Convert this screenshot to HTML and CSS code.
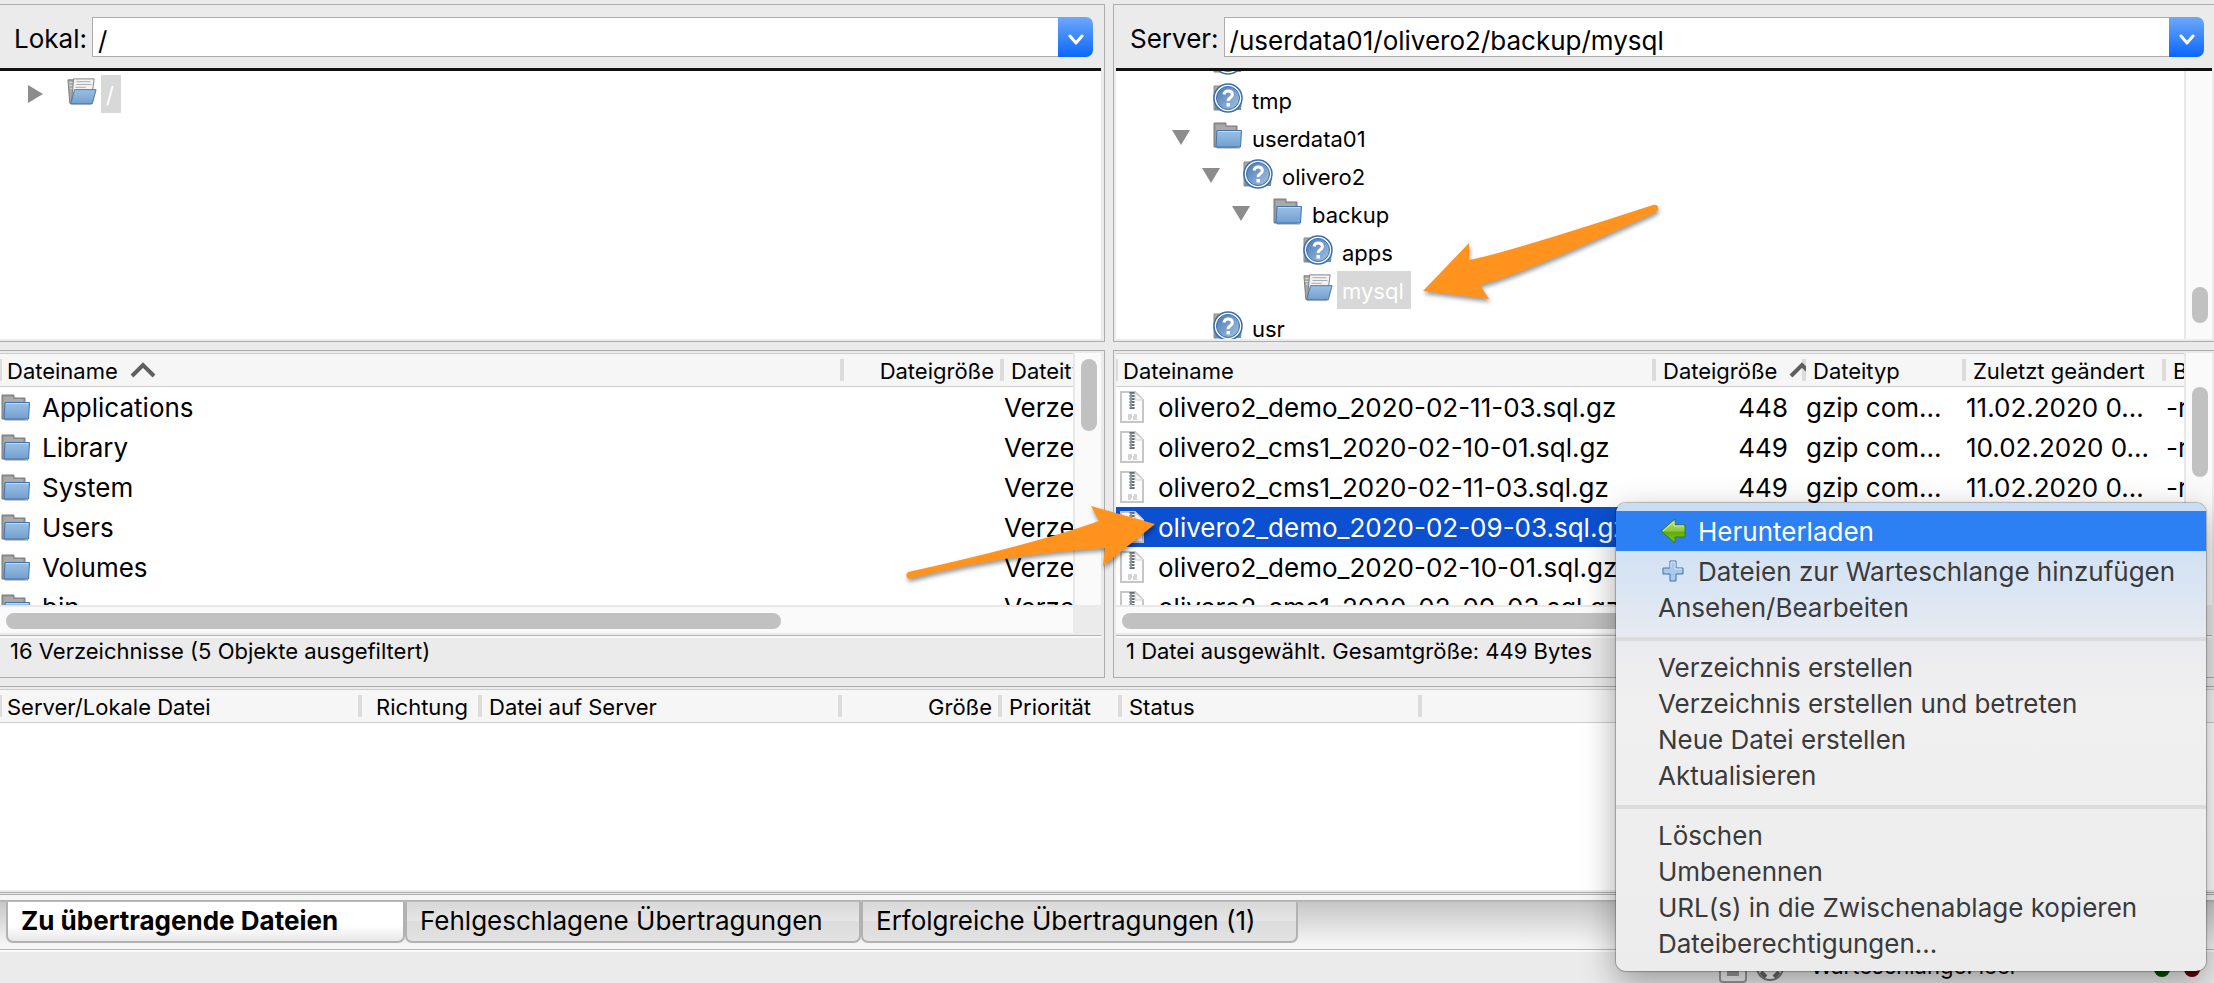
FILE: index.html
```
<!DOCTYPE html>
<html lang="de">
<head>
    <meta charset="UTF-8">
    <meta name="viewport" content="width=device-width, initial-scale=1.0">
    <title>FileZilla</title>
    <link rel="stylesheet" href="styles.css">
</head>
<body>
    <svg class="defs" aria-hidden="true">
        <defs>
            <linearGradient id="blue" x1="0" y1="0" x2="0" y2="1">
                <stop offset="0" stop-color="#9cc0e4"/>
                <stop offset="1" stop-color="#729fcf"/>
            </linearGradient>
            <linearGradient id="ball" x1="0" y1="0" x2="1" y2="1">
                <stop offset="0" stop-color="#4a78b0"/>
                <stop offset="1" stop-color="#a4c4e6"/>
            </linearGradient>
            <linearGradient id="green" x1="0" y1="0" x2="0" y2="1">
                <stop offset="0" stop-color="#b9e27c"/>
                <stop offset="0.5" stop-color="#8cc63c"/>
                <stop offset="0.55" stop-color="#5fae0a"/>
                <stop offset="1" stop-color="#7bc81c"/>
            </linearGradient>
            <symbol id="folder" viewBox="0 0 30 28">
                <path d="M1 25V1h12v3h11v21z" fill="#9b9b9b" stroke="#787878"/>
                <path d="M3 4h9M3 6h19M3 8h19" stroke="#b8b8b8"/>
                <path d="M4 26h23" stroke="#000" stroke-opacity=".2" stroke-width="2"/>
                <path d="M4 8.500h24.500l-1 16.500H3z" fill="url(#blue)" stroke="#3f74b0"/>
                <path d="M5 9.500h22.500" stroke="#c4daf0"/>
            </symbol>
            <symbol id="folder-open" viewBox="0 0 32 30">
                <path d="M1 2h8v25H3z" fill="#a8a8a8" stroke="#777"/>
                <path d="M2 5h5M2 8h5M3 11h4" stroke="#ddd"/>
                <path d="M7 1h22l-2 14-22 9z" fill="#f2f2f2" stroke="#7d7d7d"/>
                <path d="M10 4h15M10 7h16M9 10h11" stroke="#aaa"/>
                <path d="M4 28h22" stroke="#000" stroke-opacity=".25" stroke-width="2"/>
                <path d="M8 12.500h23l-4 15H4z" fill="url(#blue)" stroke="#3f74b0"/>
            </symbol>
            <symbol id="unknown" viewBox="0 0 30 30">
                <path d="M1 3h7v24H1z" fill="#aaa" stroke="#888"/>
                <path d="M2 16h27l-1 11H2z" fill="#5f92c8"/>
                <circle cx="15" cy="15" r="14" fill="#fff" stroke="#3a6ea8" stroke-width="1.500"/>
                <circle cx="15" cy="15" r="11.500" fill="url(#ball)" stroke="#3a6ea8"/>
                <path d="M11 11.500q.5-3.500 4.200-3.500t4.200 3.200q0 2-2.200 3.500t-2 3.300" fill="none" stroke="#fff" stroke-width="3"/>
                <path d="M13.500 20h3.500v3.500h-3.500z" fill="#fff"/>
            </symbol>
            <symbol id="archive" viewBox="0 0 24 32">
                <path d="M1 1h14l8 8v22H1z" fill="#fdfdfd" stroke="#c6c6c6" stroke-width="2"/>
                <path d="M15 2v7h8" fill="#f3f3f3" stroke="#d4d4d4"/>
                <path d="M12 1v17" stroke="#666d70" stroke-width="5" stroke-dasharray="2 1"/>
                <path d="M11 2v15" stroke="#90979a" stroke-width="2"/>
                <path d="M8 26h4M13 26h4M8 24h4M14 24h3M8 28h3M13 28h4" stroke="#aaa"/>
            </symbol>
            <symbol id="sort" viewBox="0 0 26 18">
                <path d="M2 15L13 4l11 11" fill="none" stroke="#5f5f5f" stroke-width="4"/>
            </symbol>
            <symbol id="chevron" viewBox="0 0 16 12">
                <path d="M2 2l6 7 6-7" fill="none" stroke="#fff" stroke-width="3" stroke-linecap="round" stroke-linejoin="round"/>
            </symbol>
        </defs>
    </svg>

    <main class="app">
        <div class="columns">
            <section class="panel local">
                <form class="address">
                    <label for="localPath">Lokal:</label>
                    <input id="localPath" type="text" value="/">
                    <button type="button" aria-label="Lokale Pfade"><svg><use href="#chevron"/></svg></button>
                </form>
                <div class="tree-pane">
                    <ul class="tree">
                        <li><div class="node"><i class="toggle closed"></i><svg><use href="#folder-open"/></svg><span class="current">/</span></div></li>
                    </ul>
                </div>
            </section>
            <section class="panel server">
                <form class="address">
                    <label for="serverPath">Server:</label>
                    <input id="serverPath" type="text" value="/userdata01/olivero2/backup/mysql">
                    <button type="button" aria-label="Server-Pfade"><svg><use href="#chevron"/></svg></button>
                </form>
                <div class="tree-pane">
                    <ul class="tree">
                        <li><div class="node"><i class="toggle"></i><svg><use href="#unknown"/></svg><span></span></div></li>
                        <li><div class="node"><i class="toggle"></i><svg><use href="#unknown"/></svg><span>tmp</span></div></li>
                        <li>
                            <div class="node"><i class="toggle open"></i><svg><use href="#folder"/></svg><span>userdata01</span></div>
                            <ul>
                                <li>
                                    <div class="node"><i class="toggle open"></i><svg><use href="#unknown"/></svg><span>olivero2</span></div>
                                    <ul>
                                        <li>
                                            <div class="node"><i class="toggle open"></i><svg><use href="#folder"/></svg><span>backup</span></div>
                                            <ul>
                                                <li><div class="node"><i class="toggle"></i><svg><use href="#unknown"/></svg><span>apps</span></div></li>
                                                <li><div class="node"><i class="toggle"></i><svg><use href="#folder-open"/></svg><span class="current">mysql</span></div></li>
                                            </ul>
                                        </li>
                                    </ul>
                                </li>
                            </ul>
                        </li>
                        <li><div class="node"><i class="toggle"></i><svg><use href="#unknown"/></svg><span>usr</span></div></li>
                    </ul>
                    <div class="vscroll"><div class="thumb low"></div></div>
                </div>
            </section>

            <section class="panel local">
                <div class="list-pane">
                    <div class="list">
                        <table>
                            <colgroup><col class="c-wide"><col class="c-type"><col></colgroup>
                            <thead>
                                <tr><th>Dateiname<svg class="sort"><use href="#sort"/></svg></th><th class="num">Dateigröße</th><th>Dateityp</th></tr>
                            </thead>
                            <tbody>
                                <tr><td><svg class="folder"><use href="#folder"/></svg>Applications</td><td></td><td>Verzeichnis</td></tr>
                                <tr><td><svg class="folder"><use href="#folder"/></svg>Library</td><td></td><td>Verzeichnis</td></tr>
                                <tr><td><svg class="folder"><use href="#folder"/></svg>System</td><td></td><td>Verzeichnis</td></tr>
                                <tr><td><svg class="folder"><use href="#folder"/></svg>Users</td><td></td><td>Verzeichnis</td></tr>
                                <tr><td><svg class="folder"><use href="#folder"/></svg>Volumes</td><td></td><td>Verzeichnis</td></tr>
                                <tr><td><svg class="folder"><use href="#folder"/></svg>bin</td><td></td><td>Verzeichnis</td></tr>
                            </tbody>
                        </table>
                    </div>
                    <div class="vscroll"><div class="thumb short"></div></div>
                    <div class="hscroll"><div class="thumb"></div></div>
                </div>
                <p class="info">16 Verzeichnisse (5 Objekte ausgefiltert)</p>
            </section>
            <section class="panel server">
                <div class="list-pane">
                    <div class="list">
                        <table>
                            <colgroup><col class="c-name"><col class="c-size"><col class="c-type"><col class="c-date"><col></colgroup>
                            <thead>
                                <tr><th>Dateiname</th><th>Dateigröße<svg class="sort"><use href="#sort"/></svg></th><th>Dateityp</th><th>Zuletzt geändert</th><th>Berechtigungen</th></tr>
                            </thead>
                            <tbody>
                                <tr><td><svg class="file"><use href="#archive"/></svg>olivero2_demo_2020-02-11-03.sql.gz</td><td class="num">448</td><td>gzip com...</td><td>11.02.2020 0...</td><td>-rw-r--r--</td></tr>
                                <tr><td><svg class="file"><use href="#archive"/></svg>olivero2_cms1_2020-02-10-01.sql.gz</td><td class="num">449</td><td>gzip com...</td><td>10.02.2020 0...</td><td>-rw-r--r--</td></tr>
                                <tr><td><svg class="file"><use href="#archive"/></svg>olivero2_cms1_2020-02-11-03.sql.gz</td><td class="num">449</td><td>gzip com...</td><td>11.02.2020 0...</td><td>-rw-r--r--</td></tr>
                                <tr class="selected"><td><svg class="file"><use href="#archive"/></svg>olivero2_demo_2020-02-09-03.sql.gz</td><td></td><td></td><td></td><td></td></tr>
                                <tr><td><svg class="file"><use href="#archive"/></svg>olivero2_demo_2020-02-10-01.sql.gz</td><td></td><td></td><td></td><td></td></tr>
                                <tr><td><svg class="file"><use href="#archive"/></svg>olivero2_cms1_2020-02-09-03.sql.gz</td><td></td><td></td><td></td><td></td></tr>
                            </tbody>
                        </table>
                    </div>
                    <div class="vscroll"><div class="thumb tall"></div></div>
                    <div class="hscroll"><div class="thumb"></div></div>
                </div>
                <p class="info">1 Datei ausgewählt. Gesamtgröße: 449 Bytes</p>
            </section>
        </div>

        <section class="queue">
            <table>
                <colgroup><col class="q-source"><col class="q-dir"><col class="q-target"><col class="c-type"><col class="q-dir"><col class="q-status"><col></colgroup>
                <thead>
                    <tr><th>Server/Lokale Datei</th><th class="mid">Richtung</th><th>Datei auf Server</th><th class="num">Größe</th><th>Priorität</th><th>Status</th><th></th></tr>
                </thead>
            </table>
        </section>
        <nav class="tabs">
            <button class="active" type="button">Zu übertragende Dateien</button>
            <button class="failed" type="button">Fehlgeschlagene Übertragungen</button>
            <button class="done" type="button">Erfolgreiche Übertragungen (1)</button>
        </nav>
        <footer class="status">
            <svg class="lock" viewBox="0 0 66 32">
                <rect x="1" y="1" width="26" height="29" rx="3" fill="#f2f2f2" stroke="#999" stroke-width="2"/>
                <path d="M8 10h12v14H8z" fill="#999"/>
                <circle cx="51" cy="15" r="13" fill="#f4f4f4" stroke="#777" stroke-width="2"/>
                <path d="M42 20l5 5M60 20l-5 5" stroke="#666" stroke-width="4"/>
            </svg>
            <span>Warteschlange: leer</span>
            <i class="led green"></i>
            <i class="led red"></i>
        </footer>
    </main>

    <svg class="pointer to-folder" viewBox="0 0 240 104">
        <path d="M2 90L48 42v17Q85 52 232 4q6-1 5 5-2 2-6 4Q100 74 59 84l9 14z"/>
    </svg>
    <svg class="pointer to-file" viewBox="0 0 256 68">
        <path d="M250 22L186 4l8 15Q130 42 3 70q-4 4 1 7Q100 52 200 46l-2 18z"/>
    </svg>

    <ul class="menu" role="menu">
        <li><button class="icon hot" type="button" role="menuitem"><svg viewBox="0 0 26 26"><path d="M1 13L15 1v6h10v12H15v6z" fill="url(#green)" stroke="#3c7d0a"/><path d="M3 13L14 3.500V8h10" fill="none" stroke="#d5efac"/></svg>Herunterladen</button></li>
        <li><button class="icon" type="button" role="menuitem"><svg viewBox="0 0 26 26"><path d="M10 3h6v7h7v6h-7v7h-6v-7H3v-6h7z" fill="#a9c8ea" stroke="#3f74b0"/><path d="M11 10V4h4v7h7" fill="none" stroke="#d8e8f8"/></svg>Dateien zur Warteschlange hinzufügen</button></li>
        <li><button type="button" role="menuitem">Ansehen/Bearbeiten</button></li>
        <li class="divider" role="separator"></li>
        <li><button type="button" role="menuitem">Verzeichnis erstellen</button></li>
        <li><button type="button" role="menuitem">Verzeichnis erstellen und betreten</button></li>
        <li><button type="button" role="menuitem">Neue Datei erstellen</button></li>
        <li><button type="button" role="menuitem">Aktualisieren</button></li>
        <li class="divider" role="separator"></li>
        <li><button type="button" role="menuitem">Löschen</button></li>
        <li><button type="button" role="menuitem">Umbenennen</button></li>
        <li><button type="button" role="menuitem">URL(s) in die Zwischenablage kopieren</button></li>
        <li><button type="button" role="menuitem">Dateiberechtigungen...</button></li>
    </ul>
</body>
</html>
```
FILE: styles.css
```
* {
    box-sizing: border-box;
}
body {
    margin: 0;
    background: #ebebeb;
    color: #000;
    font-family: Inter, "Liberation Sans", sans-serif;
    font-size: 22px;
    overflow: hidden;
}
ul, p {
    margin: 0;
    padding: 0;
    list-style: none;
}
button, input {
    font: inherit;
    color: inherit;
    border: 0;
    padding: 0;
    margin: 0;
}
.defs {
    position: absolute;
    width: 0;
    height: 0;
}
.app {
    display: flex;
    flex-direction: column;
    height: 100vh;
    padding-top: 4px;
}

/* local on the left, server on the right */
.columns {
    display: grid;
    grid-template-columns: 1105fr 1101fr;
    gap: 8px;
}
.panel {
    min-width: 0;
    border: 1px solid #adadad;
    padding: 0 2px 2px;
}
.panel.local {
    border-left: 0;
    padding-left: 0;
    padding-right: 3px;
}
.panel.server {
    border-right: 0;
}
.address {
    display: flex;
    align-items: center;
    height: 63px;
    padding: 0 8px 0 14px;
    font-size: 26px;
}
.address label {
    margin-right: 5px;
    padding-top: 4px;
}
.address input {
    flex: 1;
    min-width: 0;
    height: 40px;
    padding: 8px 5px 0;
    line-height: 30px;
    background: #fff;
    border: 1px solid #adadad;
    border-right: 0;
    outline: 0;
}
.address button {
    width: 35px;
    height: 40px;
    border-radius: 0 7px 7px 0;
    background: linear-gradient(#6ea8fc, #0a67fb);
}
.address svg {
    width: 16px;
    height: 12px;
}
.tree-pane {
    display: flex;
    height: 271px;
    background: #fff;
    border-top: 3px solid #111;
    overflow: hidden;
}
.tree {
    flex: 1;
    padding: 4px 0 0 26px;
}
.server .tree {
    padding-left: 56px;
    margin-top: -32px;
}
.tree ul {
    padding-left: 30px;
}
.node {
    display: flex;
    align-items: center;
    height: 38px;
}
.node svg {
    width: 30px;
    height: 30px;
    margin: 0 4px 4px 23px;
}
.node span {
    height: 38px;
    line-height: 40px;
    padding: 0 7px 0 5px;
}
.node .current {
    background: #d8d8d8;
    color: #fff;
}
.toggle {
    width: 18px;
    height: 18px;
}
.toggle.open {
    background: #8c8c8c;
    clip-path: polygon(0 1px, 18px 1px, 9px 16px);
}
.toggle.closed {
    background: #8c8c8c;
    clip-path: polygon(2px 0, 17px 9px, 2px 18px);
}

/* scroll bars */
.vscroll {
    flex: none;
    width: 28px;
    padding: 6px 4px 6px 6px;
    background: #fafafa;
    border-left: 2px solid #e8e8e8;
}
.hscroll {
    height: 28px;
    padding: 6px;
    background: #fafafa;
    border-top: 2px solid #e8e8e8;
}
.thumb {
    height: 16px;
    border-radius: 8px;
    background: #c1c1c1;
}
.hscroll .thumb {
    width: 73%;
}
.thumb.short {
    height: 72px;
}
.thumb.tall {
    height: 90px;
    margin-top: 28px;
}
.thumb.low {
    height: 36px;
    margin-top: 210px;
}

/* file lists */
.list-pane {
    display: grid;
    grid-template-columns: minmax(0, 1fr) 28px;
    grid-template-rows: 252px 28px;
    padding-top: 2px;
}
.list {
    background: #fff;
    overflow: hidden;
}
table {
    width: 100%;
    table-layout: fixed;
    border-collapse: separate;
    border-spacing: 0;
    white-space: nowrap;
}
.list table {
    width: 110%;
}
th {
    height: 34px;
    padding: 2px 7px 0;
    overflow: hidden;
    text-align: left;
    font-weight: 400;
    border: 1px solid #cdcdcd;
    border-width: 1px 0;
    background: #f6f6f6 linear-gradient(#dcdcdc, #dcdcdc) no-repeat right 5px / 4px 22px;
}
th:first-child {
    background-image: linear-gradient(#dcdcdc, #dcdcdc), linear-gradient(#dcdcdc, #dcdcdc);
    background-position: right 5px, left 5px;
    background-size: 4px 22px, 2px 22px;
}
th:last-child {
    background-image: none;
}
th.mid {
    text-align: center;
}
.num {
    text-align: right;
}
th.num {
    padding-right: 10px;
}
td {
    height: 40px;
    padding: 2px 0 0;
    font-size: 26px;
    line-height: 36px;
    overflow: hidden;
}
td.num {
    padding-right: 18px;
}
td svg {
    vertical-align: top;
}
.folder {
    width: 30px;
    height: 28px;
    margin: 4px 11px 0 1px;
}
.file {
    width: 24px;
    height: 32px;
    margin: 1px 14px 0 4px;
}
.sort {
    width: 26px;
    height: 18px;
    margin-left: 12px;
}
.selected td {
    background: #0a50d0;
    color: #fff;
}
.c-wide {
    width: 844px;
}
.c-name {
    width: 540px;
}
.c-size {
    width: 150px;
}
.c-type {
    width: 160px;
}
.c-date {
    width: 200px;
}
.info {
    height: 40px;
    margin-top: 2px;
    padding: 1px 10px;
    line-height: 28px;
    border-top: 1px solid #b4b4b4;
    box-shadow: inset 0 2px #f8f8f8;
}

/* transfer queue */
.queue {
    flex: 1;
    margin-top: 8px;
    background: #fff;
    border-top: 1px solid #adadad;
    border-bottom: 1px solid #adadad;
    box-shadow: inset 0 2px #ebebeb, inset 0 -2px #ebebeb;
    padding-top: 2px;
}
.q-source {
    width: 362px;
}
.q-target {
    width: 360px;
}
.q-dir {
    width: 120px;
}
.q-status {
    width: 300px;
}
.tabs {
    display: flex;
    height: 56px;
    margin-top: 1px;
    padding: 7px 0 7px 6px;
    border-top: 1px solid #adadad;
    border-bottom: 1px solid #b8b8b8;
    background: linear-gradient(#f5f5f5 5px, #adadad 5px, #c8c8c8 8px, #f5f5f5 50px);
    font-size: 26px;
}
.tabs button {
    height: 41px;
    padding: 0 13px 3px;
    text-align: left;
    white-space: nowrap;
    border: 2px solid #b2b2b2;
    border-top: 0;
    border-radius: 0 0 7px 7px;
    background: linear-gradient(#d8d8d8, #e6e6e6 48%, #dcdcdc 50%, #e2e2e2);
}
.tabs .active {
    width: 399px;
    font-weight: 700;
    background: linear-gradient(#fff 60%, #e8e8e8);
}
.tabs .failed {
    width: 456px;
}
.tabs .done {
    width: 437px;
}
.status {
    display: flex;
    height: 33px;
    align-items: flex-start;
    justify-content: flex-end;
    padding-right: 14px;
    border-top: 2px solid #fafafa;
    line-height: 28px;
}
.lock {
    width: 66px;
    height: 32px;
    margin-right: 26px;
}
.led {
    width: 16px;
    height: 16px;
    margin: 9px 0 0 14px;
    border-radius: 8px;
    background: #005000;
}
.status span {
    margin-right: 122px;
}
.led.red {
    background: #600000;
}

/* arrows drawn over the panels */
.pointer {
    position: absolute;
    overflow: visible;
    fill: #ff931e;
    filter: drop-shadow(1px 3px 2px rgba(0, 0, 0, 0.4));
}
.to-folder {
    left: 1421px;
    top: 201px;
    width: 240px;
    height: 104px;
}
.to-file {
    left: 905px;
    top: 502px;
    width: 256px;
    height: 68px;
}

.menu {
    position: absolute;
    top: 503px;
    right: 8px;
    width: 590px;
    padding: 8px 0;
    border-radius: 10px;
    background: linear-gradient(#c8dcf5, #dbe6f3 90px, #ececf0 150px, #f0f0f0 200px, #ececec);
    box-shadow: 0 0 1px 1px rgba(0, 0, 0, 0.25), 0 12px 34px rgba(0, 0, 0, 0.35);
    color: #3a3a3a;
    font-size: 26px;
}
.menu button {
    display: flex;
    align-items: center;
    width: 100%;
    height: 36px;
    padding: 0 0 3px 42px;
    background: none;
    white-space: nowrap;
}
.menu .icon {
    height: 40px;
    padding-bottom: 0;
}
.menu .icon svg {
    width: 26px;
    height: 26px;
    margin: 0 12px 0 2px;
}
.menu .hot {
    background: #2c80f3;
    color: #fff;
}
.divider {
    height: 24px;
    border-top: 10px solid transparent;
    border-bottom: 10px solid transparent;
    background: #dcdcde;
    background-clip: padding-box;
}
```
